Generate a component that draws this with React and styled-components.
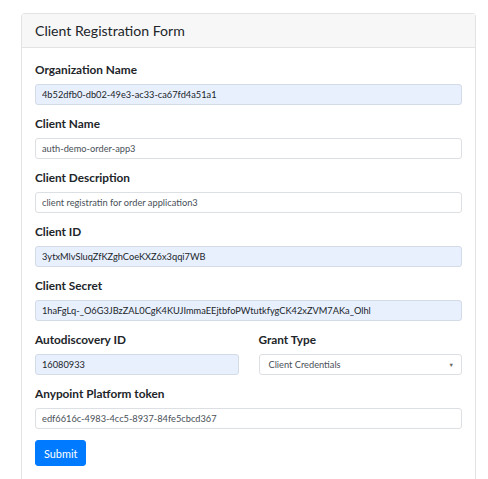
import React from "react";
import styled, { createGlobalStyle } from "styled-components";

const Global = createGlobalStyle`
  * { box-sizing: border-box; }
  body { margin: 0; background: #fff; font-family: Lato, "Open Sans", sans-serif; color: #212529; }
`;

const Page = styled.div`
  padding: 13px 12px 0 21px;
  width: 488px;
`;

const Card = styled.div`
  width: 455px;
  border: 1px solid #e3e3e3;
  border-bottom: none;
  border-radius: 4px 4px 0 0;
`;

const CardHeader = styled.div`
  height: 34px;
  background: #f7f7f7;
  border-bottom: 1px solid #e3e3e3;
  display: flex;
  align-items: center;
  padding: 0 13px;
  font-size: 14.1px;
  color: #212529;
`;

const CardBody = styled.form`
  padding: 13px 13px 14px 13px;
`;

const Row = styled.div`
  display: grid;
  grid-template-columns: 1fr 1fr;
  column-gap: 20px;
`;

const Group = styled.div`
  margin-bottom: 10px;
`;

const Label = styled.label`
  display: block;
  font-size: 11.8px;
  font-weight: 700;
  line-height: 18px;
  margin-bottom: 5px;
`;

const Input = styled.input`
  display: block;
  width: 100%;
  height: 21px;
  padding: 0 6px;
  font-family: inherit;
  font-size: 9.25px;
  color: ${p => (p.$filled ? "#212529" : "#495057")};
  background: ${p => (p.$filled ? "#e8f0fe" : "#fff")};
  border: 1px solid ${p => (p.$filled ? "#d3dbe6" : "#dcdfe3")};
  border-radius: 3px;
  outline: none;
`;

const SelectBox = styled.div`
  height: 21px;
  border: 1px solid #dcdfe3;
  border-radius: 3px;
  display: flex;
  align-items: center;
  padding: 0 7px 0 9px;
  font-size: 9.25px;
  color: #495057;
`;

const Caret = styled.span`
  margin-left: auto;
  font-size: 5.5px;
  color: #666;
`;

const Button = styled.button`
  height: 26px;
  padding: 0 8px;
  font-family: inherit;
  font-size: 10.9px;
  color: #fff;
  background: #007bff;
  border: 1px solid #007bff;
  border-radius: 3px;
  margin-top: 1px;
`;

const Field = ({ label, value, filled }) => (
  <Group>
    <Label>{label}</Label>
    <Input readOnly value={value} $filled={filled} />
  </Group>
);

export default function App() {
  return (
    <>
      <Global />
      <Page>
        <Card>
          <CardHeader>Client Registration Form</CardHeader>
          <CardBody onSubmit={e => e.preventDefault()}>
            <Field label="Organization Name" value="4b52dfb0-db02-49e3-ac33-ca67fd4a51a1" filled />
            <Field label="Client Name" value="auth-demo-order-app3" />
            <Field label="Client Description" value="client registratin for order application3" />
            <Field label="Client ID" value="3ytxMlvSluqZfKZghCoeKXZ6x3qqi7WB" filled />
            <Field label="Client Secret" value="1haFgLq-_O6G3JBzZAL0CgK4KUJImmaEEjtbfoPWtutkfygCK42xZVM7AKa_Olhl" filled />
            <Row>
              <Field label="Autodiscovery ID" value="16080933" filled />
              <Group>
                <Label>Grant Type</Label>
                <SelectBox>
                  Client Credentials
                  <Caret>▼</Caret>
                </SelectBox>
              </Group>
            </Row>
            <Field label="Anypoint Platform token" value="edf6616c-4983-4cc5-8937-84fe5cbcd367" />
            <Button type="submit">Submit</Button>
          </CardBody>
        </Card>
      </Page>
    </>
  );
}
